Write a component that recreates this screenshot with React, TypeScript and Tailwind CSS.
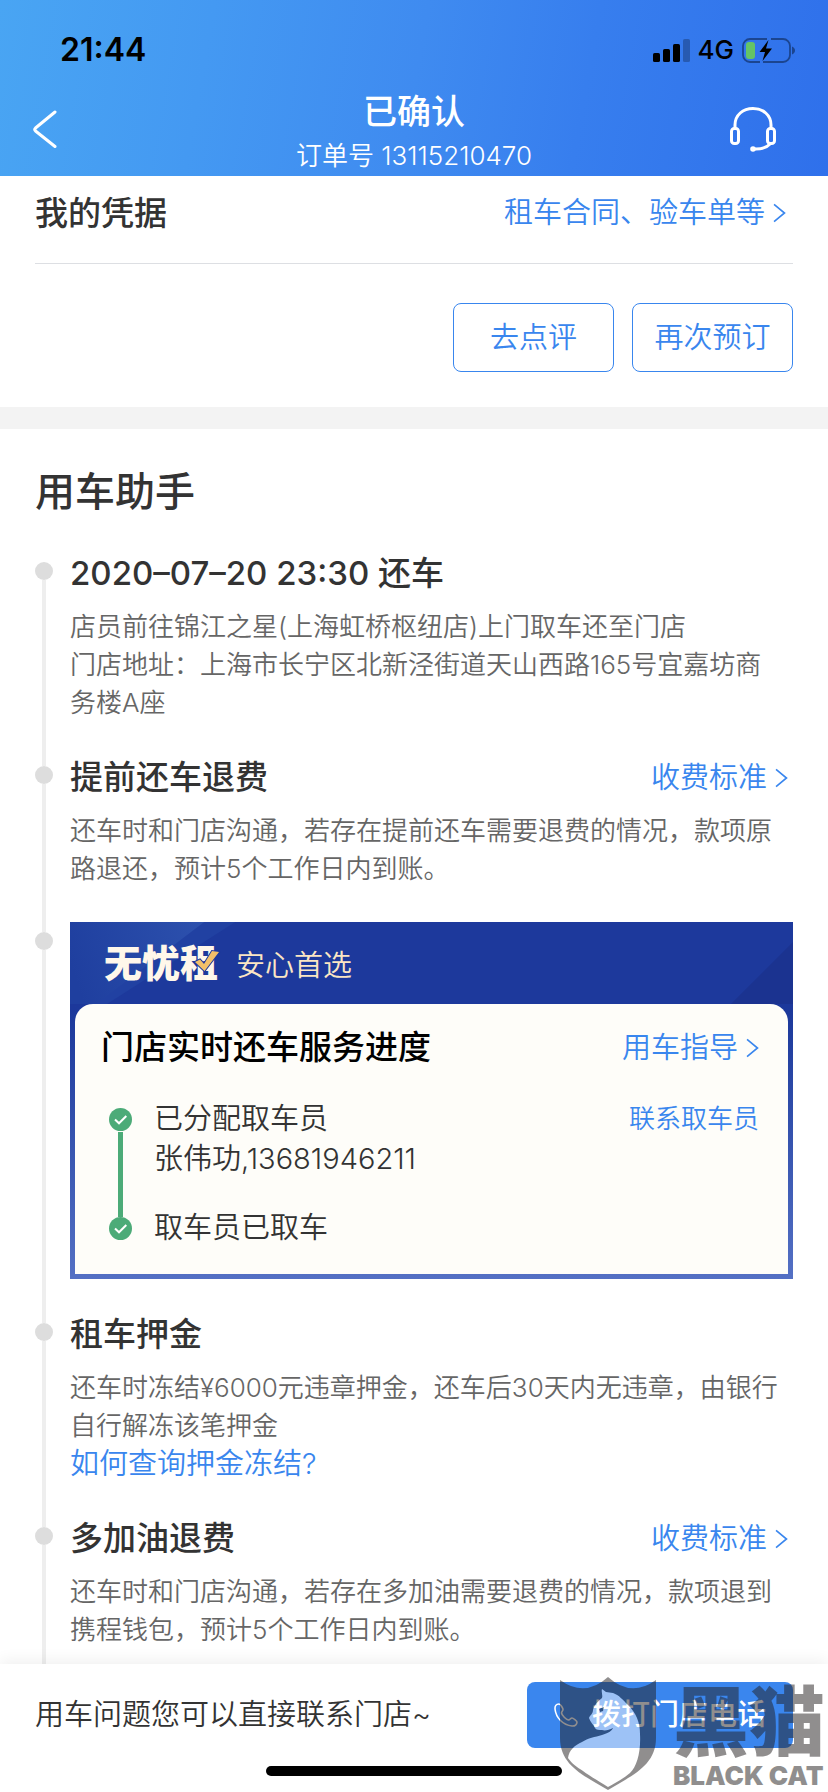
import React from 'react';

interface IconProps {
  className?: string;
}

const Chevron: React.FC<IconProps> = ({ className }) => (
  <svg viewBox="0 0 14 22" fill="none" stroke="currentColor" strokeWidth="1.8" className={className} aria-hidden="true">
    <path d="M1 1.5 12.5 11 1 20.5" />
  </svg>
);

const CheckDot: React.FC = () => (
  <svg viewBox="0 0 23 23" className="h-[23px] w-[23px] shrink-0" aria-hidden="true">
    <circle cx="11.5" cy="11.5" r="11.5" fill="#4cab78" />
    <path d="M6 11.5 10 15.3 17.3 8" fill="none" stroke="#fff" strokeWidth="2" />
  </svg>
);

const StatusBar: React.FC = () => (
  <div className="flex h-[100px] items-center justify-between pl-[60px] pr-[33px] text-black">
    <span className="text-[32px] font-semibold leading-none">21:44</span>
    <div className="flex items-center gap-2">
      <svg viewBox="0 0 37 23" className="h-[23px] w-[37px]" aria-hidden="true">
        <rect x="0" y="14" width="7" height="9" rx="1.6" />
        <rect x="10" y="10" width="7" height="13" rx="1.6" />
        <rect x="20" y="5" width="7" height="18" rx="1.6" />
        <rect x="30" y="0" width="7" height="23" rx="1.6" opacity="0.25" />
      </svg>
      <span className="text-[26px] font-medium leading-none">4G</span>
      <svg viewBox="0 0 53 25" className="h-[25px] w-[53px]" aria-hidden="true">
        <path
          d="M25 1H8a7 7 0 0 0-7 7v9a7 7 0 0 0 7 7h10M29 1h12a7 7 0 0 1 7 7v9a7 7 0 0 1-7 7H21"
          fill="none"
          stroke="#1b4590"
          strokeWidth="1.8"
        />
        <path d="M50 8.5c4 1.5 4 6.5 0 8z" fill="#1b4590" />
        <rect x="4" y="4" width="9" height="17" rx="3" fill="#65c466" />
        <path d="M26.5 2 17.5 14h5.5l-2.5 9 9.5-12.5h-6z" />
      </svg>
    </div>
  </div>
);

const Header: React.FC = () => (
  <header className="sticky top-0 z-10 h-[176px] bg-[linear-gradient(100deg,#49a5f3_0%,#4499f2_25%,#3f8bf0_50%,#377eee_70%,#2f70eb_100%)] text-white">
    <StatusBar />
    <div className="-mt-3 flex items-center justify-between pl-[32px] pr-[51px]">
      <button type="button" aria-label="返回" className="w-[67px] pb-[6px]">
        <svg viewBox="0 0 26 38" fill="none" stroke="currentColor" strokeWidth="3" strokeLinecap="round" strokeLinejoin="round" className="h-[38px] w-[26px]">
          <path d="M23 2 3.5 18Q2 19.5 3.5 21L23 36.5" />
        </svg>
      </button>
      <div className="text-center">
        <h1 className="text-[34px] font-medium leading-[48px]">已确认</h1>
        <p className="text-[26px] font-[350] leading-[40px]">订单号 13115210470</p>
      </div>
      <button type="button" aria-label="客服" className="w-[48px] pb-[6px]">
        <svg viewBox="0 0 48 46" fill="none" stroke="currentColor" strokeWidth="3" className="h-[46px] w-[48px]">
          <path d="M6 22v-3C6 9 14 2.5 24 2.5S42 9 42 19v3" />
          <rect x="2.5" y="22.5" width="7" height="15" rx="2.8" />
          <rect x="38.5" y="22.5" width="7" height="15" rx="2.8" />
          <path d="M41 38c-4 4.5-10 5.5-17 5" />
          <circle cx="24" cy="43" r="1.3" />
        </svg>
      </button>
    </div>
  </header>
);

const MoreLink: React.FC<{ label: string }> = ({ label }) => (
  <a href="#" className="flex items-center gap-2 text-[29px] font-[350] text-[#3986ee]">
    {label}
    <Chevron className="h-[20px] w-[13px]" />
  </a>
);

interface ItemProps {
  first?: boolean;
  last?: boolean;
  children: React.ReactNode;
}

const TimelineItem: React.FC<ItemProps> = ({ first, last, children }) => (
  <li className="flex gap-[17px]">
    <div className="flex w-[18px] shrink-0 flex-col items-center">
      <span className={first ? 'h-[10px] w-1' : 'h-[10px] w-1 bg-[#eee]'} />
      <span className="h-[18px] w-[18px] rounded-full bg-[#ddd]" />
      <span className="w-1 grow bg-[#eee]" />
    </div>
    <div className={last ? 'min-w-0 grow pb-[15px]' : 'min-w-0 grow pb-[34px]'}>{children}</div>
  </li>
);

const ItemTitle: React.FC<{ title: string; link?: string }> = ({ title, link }) => (
  <div className="mb-3 flex h-[44px] items-center justify-between pr-[5px]">
    <h3 className="text-[33px] font-medium text-[#333]">{title}</h3>
    {link && <MoreLink label={link} />}
  </div>
);

const ItemText: React.FC<{ children: React.ReactNode }> = ({ children }) => (
  <p className="whitespace-pre-line text-[26px] font-[350] leading-[38px] text-[#666]">{children}</p>
);

const ServiceCard: React.FC = () => (
  <section className="bg-linear-to-b from-[#1c389b] from-25% to-[#5470c4] px-[5px] pb-[5px]">
    <div className="relative -mx-[5px] flex h-[82px] items-center bg-[#1d399c] pl-[34px]">
      <svg viewBox="0 0 722 82" preserveAspectRatio="none" className="absolute inset-0 h-full w-full" aria-hidden="true">
        <defs>
          <linearGradient id="shine" x1="0" y1="0.5" x2="1" y2="0.3">
            <stop offset="0" stopColor="#1f3f9f" />
            <stop offset="1" stopColor="#2c50ad" />
          </linearGradient>
        </defs>
        <path d="M0 0h165L37 82H0z" fill="#2141a2" />
        <path d="M0 0h134L26 82H0z" fill="url(#shine)" />
        <path d="M722 20v62h-62z" fill="#1b3390" />
      </svg>
      <div className="relative text-[38px] font-black leading-[44px] text-[#fff7ea]">
        无忧租
        <svg viewBox="-2 -2 28 24" className="absolute right-[-3px] top-2 h-[24px] w-[28px]" aria-hidden="true">
          <path d="M0 11 5 8.5 9 13 17 0 24 1 9.5 20z" fill="#f3c069" stroke="#1d399c" strokeWidth="2" paintOrder="stroke" />
        </svg>
      </div>
      <span className="relative ml-[18px] mt-[6px] text-[29px] font-[350] text-[#fbe6c4]">安心首选</span>
    </div>
    <div className="bg-[linear-gradient(#1c389b,#2040a2)]">
      <div className="rounded-t-[18px] bg-[#fefdf9] pb-[26px] pl-[26px] pr-[29px] pt-[22px]">
        <div className="mb-[29px] flex h-[44px] items-center justify-between">
          <h3 className="text-[33px] font-medium text-black">门店实时还车服务进度</h3>
          <MoreLink label="用车指导" />
        </div>
        <ol className="pl-2 text-[29px] font-[350] leading-[40px] text-[#333]">
          <li className="flex gap-[22px]">
            <div className="flex shrink-0 flex-col items-center pt-[9px]">
              <CheckDot />
              <span className="mt-px w-[5px] grow bg-[#4cab78]" />
            </div>
            <div className="grow pb-[29px]">
              <p>已分配取车员</p>
              <p>张伟功,13681946211</p>
            </div>
            <a href="#" className="text-[26px] text-[#3986ee]">联系取车员</a>
          </li>
          <li className="flex gap-[22px]">
            <div className="flex shrink-0 flex-col items-center">
              <span className="h-[9px] w-[5px] bg-[#4cab78]" />
              <CheckDot />
            </div>
            <p>取车员已取车</p>
          </li>
        </ol>
      </div>
    </div>
  </section>
);

const Watermark: React.FC = () => (
  <div className="pointer-events-none absolute bottom-0 right-[3px] flex items-end gap-[16px] text-[#231f20] opacity-50">
    <svg viewBox="0 0 98 116" className="h-[116px] w-[98px]" aria-hidden="true">
      <path d="M1 4Q26 22 49 1Q72 22 97 4V62C97 90 72 100 49 114C26 100 1 90 1 62Z" fill="currentColor" />
      <path
        d="M43 13 47 16 54 17C60 19 64 24 69 29C77 37 81 46 81 58C82 76 78 90 71 97C64 103 56 107 49 111C38 104 29 99 24 95C18 91 13 88 9 82C10 74 16 69 23 66C29 62 36 61 43 59C49 57 53 55 54 52C50 54 46 55 43 54C40 54 37 54 36 52C35 49 31 46 30 42C31 39 34 38 34 34C35 30 37 27 43 22C44 19 42 16 43 13Z"
        fill="#fff"
      />
      <path d="M40 33 45 31 44 35 41 36z" fill="currentColor" />
    </svg>
    <div className="flex flex-col">
      <span className="text-[76px] font-black leading-[76px]">黑猫</span>
      <span className="text-[26px] font-black leading-[32px]">BLACK CAT</span>
    </div>
  </div>
);

const Footer: React.FC = () => (
  <footer className="sticky bottom-0 z-10 h-[128px] bg-white pt-[18px] shadow-[0_-4px_14px_rgba(0,0,0,0.06)]">
    <div className="flex h-[66px] items-center justify-between px-[35px]">
      <p className="text-[29px] font-[350] text-[#333]">用车问题您可以直接联系门店~</p>
      <button type="button" className="flex h-[66px] w-[266px] items-center justify-center gap-[14px] rounded-lg bg-[#3a86ee] text-[29px] font-medium text-white">
        <svg viewBox="0 0 24 24" fill="none" stroke="currentColor" strokeWidth="1.6" className="h-[24px] w-[24px]" aria-hidden="true">
          <path d="M5 1C2 1 .8 3 1 6c1 9 8 16 17 17 3 .2 5-1.5 5-4 0-1-4-4-5-4-1.5 0-2 2-3.5 2-2.5-.5-6.5-4.5-7-7C7.5 8.5 9 8 9 6.5 9 5 6.5 1 5 1z" />
        </svg>
        拨打门店电话
      </button>
    </div>
    <div className="mx-auto mt-[18px] h-[10px] w-[296px] rounded-full bg-black" />
    <Watermark />
  </footer>
);

const App: React.FC = () => (
  <div className="flex min-h-screen flex-col bg-white font-['Inter','Noto_Sans_CJK_SC',sans-serif]">
    <Header />
    <main className="flex grow flex-col">
      <section className="px-[35px] pb-[35px]">
        <div className="flex items-center justify-between border-b border-[#dddfe3] pb-[26px] pr-[7px] pt-[13px]">
          <h2 className="text-[33px] font-medium leading-[48px] text-[#333]">我的凭据</h2>
          <MoreLink label="租车合同、验车单等" />
        </div>
        <div className="mt-[39px] flex justify-end gap-[18px] text-[29px] font-[350] text-[#3986ee]">
          <button type="button" className="h-[69px] w-[161px] rounded-lg border border-[#3986ee]">去点评</button>
          <button type="button" className="h-[69px] w-[161px] rounded-lg border border-[#3986ee]">再次预订</button>
        </div>
      </section>
      <div className="h-[22px] bg-[#f3f3f3]" />
      <section className="flex grow flex-col px-[35px] pt-[37px]">
        <h2 className="mb-[34px] text-[40px] font-medium leading-[52px] text-[#333]">用车助手</h2>
        <ol className="grow">
          <TimelineItem first>
            <ItemTitle title="2020–07–20 23:30 还车" />
            <ItemText>
              {'店员前往锦江之星(上海虹桥枢纽店)上门取车还至门店\n门店地址：上海市长宁区北新泾街道天山西路165号宜嘉坊商\n务楼A座'}
            </ItemText>
          </TimelineItem>
          <TimelineItem>
            <ItemTitle title="提前还车退费" link="收费标准" />
            <ItemText>
              {'还车时和门店沟通，若存在提前还车需要退费的情况，款项原\n路退还，预计5个工作日内到账。'}
            </ItemText>
          </TimelineItem>
          <TimelineItem>
            <ServiceCard />
          </TimelineItem>
          <TimelineItem>
            <ItemTitle title="租车押金" />
            <ItemText>
              {'还车时冻结¥6000元违章押金，还车后30天内无违章，由银行\n自行解冻该笔押金'}
            </ItemText>
            <a href="#" className="block text-[29px] font-[350] leading-[38px] text-[#3986ee]">如何查询押金冻结?</a>
          </TimelineItem>
          <TimelineItem last>
            <ItemTitle title="多加油退费" link="收费标准" />
            <ItemText>
              {'还车时和门店沟通，若存在多加油需要退费的情况，款项退到\n携程钱包，预计5个工作日内到账。'}
            </ItemText>
          </TimelineItem>
        </ol>
      </section>
    </main>
    <Footer />
  </div>
);

export default App;
